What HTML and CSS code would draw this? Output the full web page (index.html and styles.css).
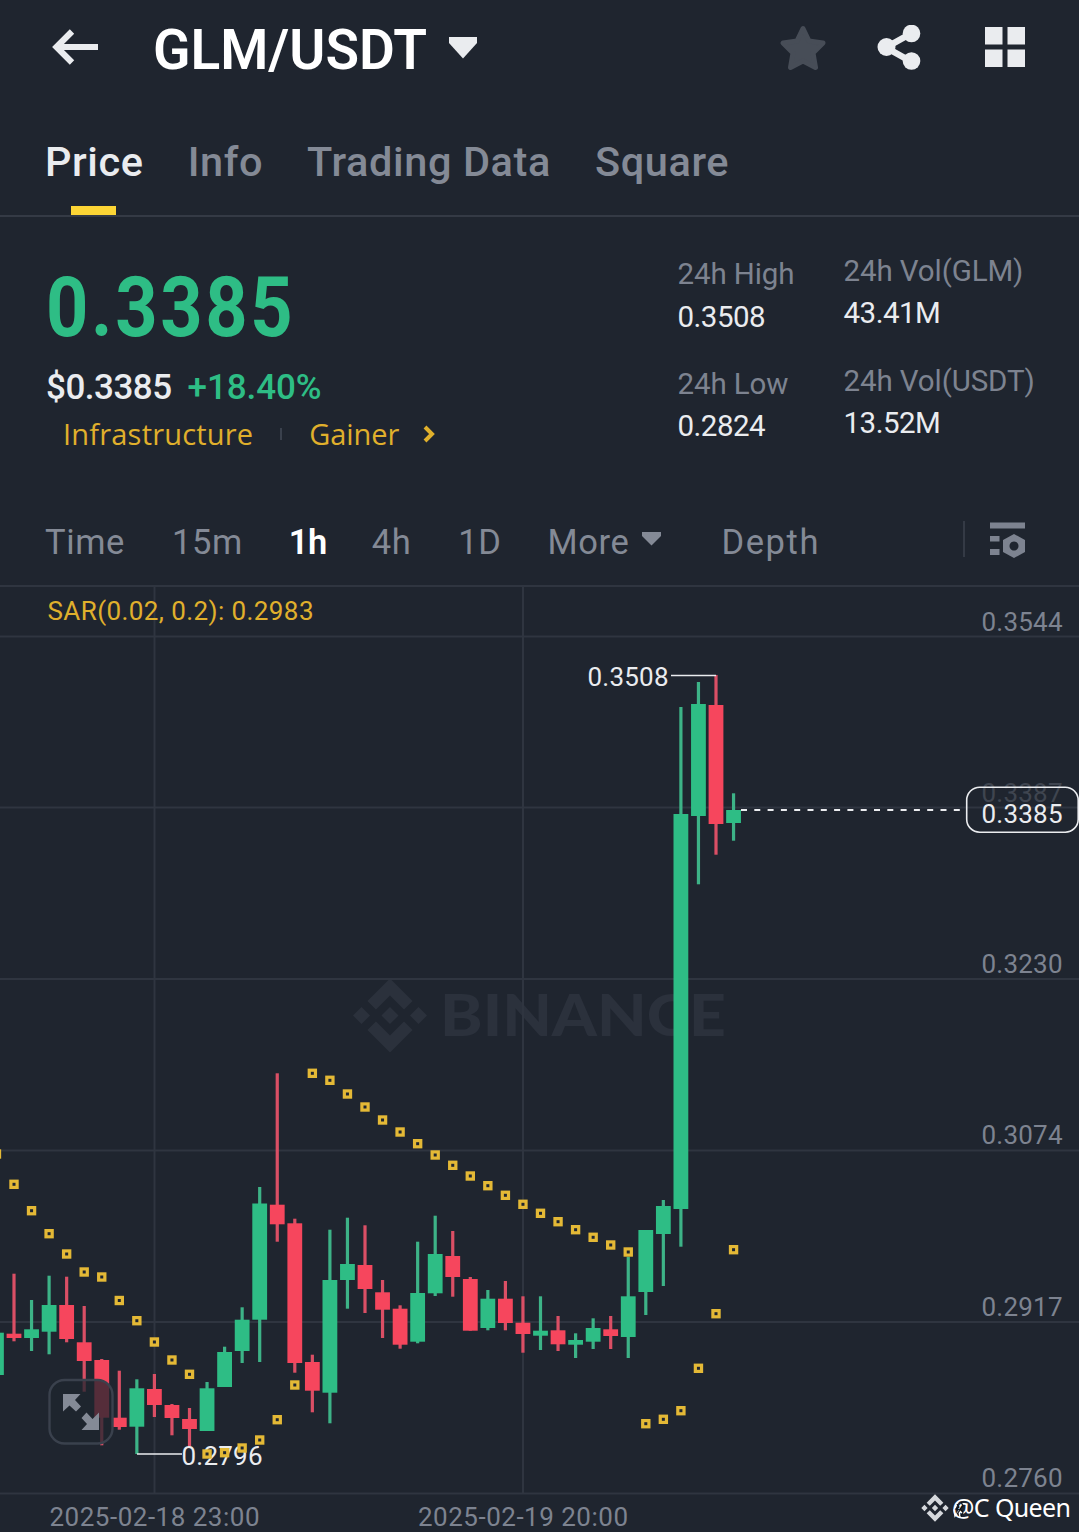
FILE: index.html
```
<!DOCTYPE html>
<html lang="en">

<head>
    <meta charset="utf-8">
    <title>GLM/USDT</title>
    <link rel="stylesheet" href="styles.css">
</head>

<body>
    <div class="header">
        <svg class="back" width="48" height="48" viewBox="0 0 48 48">
            <path d="M47 22H8M21 6.500L5.500 22L21 37.500" fill="none" stroke="#eaecef" stroke-width="6.200" />
        </svg>
        <h1>GLM/USDT</h1>
        <svg class="caret" width="28" height="22" viewBox="0 0 28 22">
            <path d="M0 0H28V6L14 21.500L0 6Z" fill="#eaecef" />
        </svg>
        <div class="actions">
            <svg width="48" height="48" viewBox="0 0 48 48">
                <path d="M24 3.500L30 16L44 18L34 28L36.500 42.500L24 36L11.500 42.500L14 28L4 18L18 16Z" fill="#474d57" stroke="#474d57" stroke-width="5" stroke-linejoin="round" />
            </svg>
            <svg width="48" height="48" viewBox="0 0 48 48">
                <path d="M35 8.500L10 22.500L35 36.500" fill="none" stroke="#eaecef" stroke-width="6.500" />
                <circle cx="10.500" cy="22" r="9" fill="#eaecef" />
                <circle cx="35.500" cy="8.500" r="8.800" fill="#eaecef" />
                <circle cx="35.500" cy="36" r="8.800" fill="#eaecef" />
            </svg>
            <svg width="48" height="48" viewBox="0 0 48 48">
                <path d="M4 2h17.500v17.500h-17.500zM26.500 2h17.500v17.500h-17.500zM4 24.500h17.500v17.500h-17.500zM26.500 24.500h17.500v17.500h-17.500z" fill="#eaecef" />
            </svg>
        </div>
    </div>

    <div class="tabs">
        <div class="tab active">Price</div>
        <div class="tab">Info</div>
        <div class="tab">Trading Data</div>
        <div class="tab">Square</div>
    </div>

    <div class="summary">
        <div class="quote">
            <div class="price">0.3385</div>
            <div class="change"><span class="fiat">$0.3385</span><span class="percent">+18.40%</span></div>
            <div class="tags">
                <span class="infra">Infrastructure</span>
                <i class="tag-line"></i>
                <span class="gainer">Gainer</span>
                <svg width="12" height="18" viewBox="0 0 12 18">
                    <path d="M2 2L9 9L2 16" fill="none" stroke="#e0b02c" stroke-width="4" />
                </svg>
            </div>
        </div>
        <div class="stats">
            <div class="label">24h High</div>
            <div class="value">0.3508</div>
            <div class="label">24h Low</div>
            <div class="value">0.2824</div>
        </div>
        <div class="stats volume">
            <div class="label">24h Vol(GLM)</div>
            <div class="value">43.41M</div>
            <div class="label">24h Vol(USDT)</div>
            <div class="value">13.52M</div>
        </div>
    </div>

    <div class="intervals">
        <span>Time</span>
        <span>15m</span>
        <span class="active">1h</span>
        <span>4h</span>
        <span>1D</span>
        <span class="more">More
            <svg width="20" height="14" viewBox="0 0 20 14">
                <path d="M0 0H19V4L9.500 13.500L0 4Z" fill="#848a96" />
            </svg>
        </span>
        <span class="depth">Depth</span>
        <div class="settings">
            <svg width="36" height="36" viewBox="0 0 36 36">
                <path d="M0 1.500h35v6h-35zM0 15h9.500v5.500h-9.500zM0 28h9.500v6h-9.500z" fill="#7d8390" />
                <path d="M24 13L35 19V31L24 37L13 31V19ZM24 20.500a4.500 4.500 0 1 0 0.010 0Z" fill="#7d8390" fill-rule="evenodd" />
            </svg>
        </div>
    </div>

    <svg class="chart" width="1079" height="947" viewBox="0 585 1079 947">
        <defs>
            <!-- diamond logo, 2 x 2 units around the origin -->
            <g id="logo">
                <path d="M0 -1L.61 -.39L.38 -.16L0 -.54L-.38 -.16L-.61 -.39ZM0 1L.61 .39L.38 .16L0 .54L-.38 .16L-.61 .39Z" />
                <path d="M0 -.23L.23 0L0 .23L-.23 0ZM-1 0L-.77 -.23L-.54 0L-.77 .23ZM1 0L.77 -.23L.54 0L.77 .23Z" />
            </g>
        </defs>

        <g class="watermark">
            <use href="#logo" transform="translate(390 1015.500) scale(37)" />
            <text x="440" y="1036" textLength="286" lengthAdjust="spacingAndGlyphs">BINANCE</text>
        </g>

        <path class="grid" d="M0 586H1079M0 636.500H1079M0 807.500H1079M0 979H1079M0 1150.500H1079M0 1322H1079M0 1493.500H1079M154.500 586V1493M523 586V1493" />

        <g class="axis">
            <text x="981.500" y="630.500" textLength="81">0.3544</text>
            <text class="dim" x="981.500" y="801.500" textLength="81">0.3387</text>
            <text x="981.500" y="973" textLength="81">0.3230</text>
            <text x="981.500" y="1144" textLength="81">0.3074</text>
            <text x="981.500" y="1316" textLength="81">0.2917</text>
            <text x="981.500" y="1487" textLength="81">0.2760</text>
            <text x="49.500" y="1526" textLength="210">2025-02-18 23:00</text>
            <text x="418" y="1526" textLength="210">2025-02-19 20:00</text>
        </g>
        <text class="sar-label" x="47.500" y="619.500" textLength="266">SAR(0.02, 0.2): 0.2983</text>

        <g id="candles"></g>

        <path class="pointer" d="M671 675.500H716M137 1454H182" />
        <text class="mark" x="587.500" y="686" textLength="81">0.3508</text>
        <text class="mark" x="181.500" y="1465" textLength="81">0.2796</text>

        <path class="last-line" d="M741 810H965" />
        <rect class="last-box" x="966.700" y="787.200" width="111.500" height="45" rx="13" />
        <text class="mark" x="981.500" y="822.500" textLength="81">0.3385</text>

        <g id="sar"></g>

        <rect class="expand" x="49.500" y="1380" width="63" height="63.500" rx="15" />
        <path class="expand-icon" d="M63 1394H80.500L75 1400L81 1406.500L76 1411.500L69.500 1405.500L63 1411.500ZM99 1430H81.500L87 1424L81.500 1418L86.500 1412.500L92.500 1419L99 1412.500Z" />

        <use class="stamp-logo" href="#logo" transform="translate(935 1508) scale(13.700)" />
        <text class="stamp" x="952" y="1517" textLength="119">@C Queen</text>
        <path class="scratch-light" d="M958 1502l-4 8l1 6l4 -5l1 6" />
        <path class="scratch" d="M957 1504l2 3l-3 2l4 1l-3 4M961 1502l2 4l-3 3l3 3l-2 4" />
    </svg>

    <script>
        // direction, high, body top, body bottom, low
        var candles = [
            ['g', 1332.7, 1332.7, 1375, 1375],
            ['r', 1273.7, 1333.7, 1338, 1341.3],
            ['g', 1300, 1329.3, 1338, 1351],
            ['g', 1275.7, 1305, 1331.7, 1354.3],
            ['r', 1276.7, 1305, 1339, 1342.3],
            ['r', 1306, 1342.3, 1361, 1391.7],
            ['r', 1359, 1360, 1417.7, 1445.3],
            ['r', 1370.7, 1417.7, 1427, 1429.7],
            ['g', 1379.3, 1388.3, 1426.7, 1454],
            ['r', 1374, 1389, 1405, 1417],
            ['r', 1404, 1405, 1418, 1435.3],
            ['r', 1408, 1419, 1429, 1446],
            ['g', 1382, 1388.3, 1431, 1431],
            ['g', 1346.7, 1352, 1387, 1387],
            ['g', 1307.3, 1319.7, 1351, 1363],
            ['g', 1187, 1203.5, 1319.7, 1362],
            ['r', 1073.3, 1204.7, 1224.3, 1241.7],
            ['r', 1218.7, 1223.3, 1363, 1372.7],
            ['r', 1354.7, 1362, 1390.7, 1412.3],
            ['g', 1229.7, 1280, 1392.7, 1423.3],
            ['g', 1217.7, 1264, 1280, 1308.7],
            ['r', 1225.3, 1265, 1289, 1313],
            ['r', 1280, 1292.3, 1309.7, 1338],
            ['r', 1305.3, 1308.7, 1344.7, 1348.7],
            ['g', 1241.7, 1293, 1341.7, 1343.3],
            ['g', 1215.7, 1254, 1293.3, 1296],
            ['r', 1231, 1256, 1277, 1296.7],
            ['r', 1277, 1279, 1330.7, 1330.7],
            ['g', 1290, 1298.7, 1328, 1330.3],
            ['r', 1281, 1298.7, 1323, 1330.3],
            ['r', 1296.3, 1322.7, 1334, 1352.7],
            ['g', 1296.3, 1330.7, 1335.7, 1350],
            ['r', 1316, 1330.3, 1344.3, 1351],
            ['g', 1333.3, 1340, 1344.7, 1358],
            ['g', 1318.3, 1328, 1341.7, 1349],
            ['r', 1316, 1329.3, 1336, 1349],
            ['g', 1256.7, 1296.3, 1337, 1358],
            ['g', 1230, 1230, 1292, 1315],
            ['g', 1200, 1206, 1234, 1286],
            ['g', 707, 814, 1209, 1246.7],
            ['g', 682, 704, 816, 884.3],
            ['r', 675, 705, 824, 854.7],
            ['g', 793.3, 810, 823, 840.7]
        ]
        var sar = [1154, 1184.3, 1210.7, 1233.7, 1254, 1272, 1277, 1300.5, 1320.7, 1342, 1360, 1374.3,
            1454, 1452.7, 1448, 1440, 1419.7, 1385,
            1073.3, 1080.3, 1094, 1107, 1120, 1132, 1143.7, 1155, 1165.3, 1176, 1185.7, 1195.3, 1204.3,
            1213.3, 1221.7, 1229.7, 1237.3, 1245, 1252,
            1423.7, 1419.3, 1410.7, 1368.3, 1313.7, 1249.7]
        var bars = ''
        var dots = ''

        for (var i = 0; i < candles.length; i++) {
            var c = candles[i]
            var x = 14 + 17.55 * (i - 1)
            bars += '<g class="' + (c[0] == 'g' ? 'up' : 'down') + '">'
            bars += '<rect class="wick" x="' + (x - 1.6) + '" y="' + c[1] + '" width="3.2" height="' + (c[4] - c[1]) + '"/>'
            bars += '<rect x="' + (x - 7.4) + '" y="' + c[2] + '" width="14.8" height="' + (c[3] - c[2]) + '"/></g>'
            dots += '<rect x="' + (x - 3.1) + '" y="' + (sar[i] - 3.1) + '" width="6.2" height="6.2"/>'
        }
        document.getElementById('candles').innerHTML = bars
        document.getElementById('sar').innerHTML = dots
    </script>
</body>

</html>
```
FILE: styles.css
```
body {
    margin: 0;
    width: 1079px;
    height: 1532px;
    overflow: hidden;
    background-color: #1f252f;
    color: #eaecef;
    font-family: Roboto, "Liberation Sans", sans-serif;
}

svg {
    display: block;
    flex-shrink: 0;
}

.header {
    display: flex;
    align-items: center;
    height: 98px;
    padding-left: 51px;
}

.header h1 {
    margin: 1px 0 0 54px;
    width: 296px;
    font-size: 55px;
    font-weight: 600;
    color: #fff;
    white-space: nowrap;
}

.caret {
    margin-bottom: 3px;
}

.actions {
    display: flex;
    margin-left: auto;
    padding-right: 50px;
    gap: 49px;
}

.actions svg:last-child {
    margin-left: 8px;
}

.tabs {
    display: flex;
    box-sizing: border-box;
    height: 119px;
    padding-left: 45px;
    border-bottom: 2px solid #343a45;
    font-size: 41.5px;
    font-weight: 500;
    letter-spacing: 0.6px;
    color: #848a96;
    gap: 44px;
}

.tab {
    position: relative;
    padding-top: 39px;
    line-height: 50px;
}

.tab.active {
    color: #eaecef;
}

.tab.active::after {
    content: "";
    position: absolute;
    left: 26px;
    bottom: 0;
    width: 45px;
    height: 9px;
    background-color: #fcd535;
}

.summary {
    display: flex;
    height: 283px;
}

.quote {
    width: 631px;
    padding: 46px 0 0 46px;
}

.price {
    font-size: 84px;
    font-weight: 700;
    line-height: 90px;
    letter-spacing: 3px;
    color: #2ebd85;
    transform: scaleX(0.88);
    transform-origin: left;
}

.change {
    display: flex;
    gap: 16px;
    margin-top: 12px;
    font-size: 35px;
    font-weight: 500;
    line-height: 46px;
    letter-spacing: -0.5px;
}

.percent {
    letter-spacing: -0.1px;
    color: #2ebd85;
}

.tags {
    display: flex;
    align-items: center;
    margin-top: 3px;
    padding-left: 17px;
    font-family: "Open Sans", sans-serif;
    font-size: 29px;
    line-height: 40px;
    letter-spacing: 0.2px;
    color: #e0b02c;
}

.tag-line {
    width: 2px;
    height: 12px;
    margin: 0 27px;
    background-color: #3a414d;
}

.gainer {
    letter-spacing: -0.1px;
}

.tags svg {
    margin-left: 24px;
}

.stats {
    width: 166px;
    padding-top: 37px;
    padding-left: 0.5px;
    font-size: 29.5px;
    line-height: 40px;
    white-space: nowrap;
}

.volume {
    padding-top: 34px;
    padding-left: 0;
}

.label {
    letter-spacing: -0.1px;
    color: #7d8390;
}

.value {
    margin: 2.5px 0 27px;
    letter-spacing: -0.5px;
}

.volume .value {
    margin: 2px 0 27.5px;
}

.intervals {
    display: flex;
    align-items: center;
    box-sizing: border-box;
    height: 85px;
    padding-left: 45px;
    padding-bottom: 2px;
    gap: 47px;
    font-size: 34.5px;
    letter-spacing: 0.6px;
    color: #848a96;
}

.intervals .active {
    margin: 0 -2px 0 -1px;
    font-weight: 600;
    letter-spacing: -0.5px;
    color: #fff;
}

.more {
    display: flex;
    align-items: center;
    gap: 13px;
    margin-left: -1px;
    margin-right: 12px;
}

.more svg {
    margin-bottom: 6px;
}

.intervals .depth {
    letter-spacing: 1.6px;
}

.settings {
    margin-left: auto;
    margin-right: 53px;
    margin-bottom: 5px;
    padding-left: 25px;
    border-left: 2px solid #343a45;
}

.settings svg {
    overflow: visible;
}

.chart text {
    font-size: 26px;
}

.grid {
    fill: none;
    stroke: #2f3540;
    stroke-width: 2;
}

.watermark {
    fill: #2b313c;
}

.chart .watermark text {
    font-family: Lato, sans-serif;
    font-size: 58px;
    font-weight: 900;
}

.axis {
    fill: #7d8390;
}

.axis .dim {
    fill: #3f4550;
}

.sar-label {
    fill: #e0b02c;
}

.up {
    fill: #2ebd85;
}

.down {
    fill: #f6465d;
}

.up .wick {
    fill: #3db387;
}

.down .wick {
    fill: #da4f65;
}

.mark {
    fill: #eaecef;
}

.pointer {
    fill: none;
    stroke: #eaecef;
    stroke-width: 1.6;
}

.last-line {
    stroke: #eaecef;
    stroke-width: 1.8;
    stroke-dasharray: 6 7.3;
}

.last-box {
    fill: none;
    stroke: #eaecef;
    stroke-width: 1.6;
}

#sar {
    fill: #1f252f;
    stroke: #e4b936;
    stroke-width: 3.2;
}

.expand {
    fill: #1f252f;
    fill-opacity: 0.75;
    stroke: #3a414d;
    stroke-width: 2.4;
}

.expand-icon {
    fill: #848a96;
}

.stamp-logo {
    fill: #d5d8dc;
}

.chart .stamp {
    font-family: "Noto Sans", sans-serif;
    font-size: 25px;
    fill: #fff;
}

.scratch {
    fill: none;
    stroke: #0d1117;
    stroke-width: 1.2;
}

.scratch-light {
    fill: none;
    stroke: #fff;
    stroke-width: 1.4;
}
```
